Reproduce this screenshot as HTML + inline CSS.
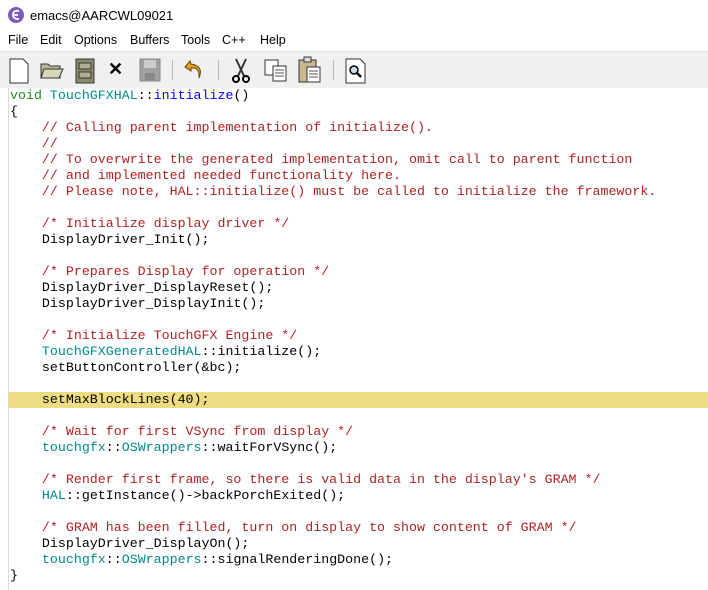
<!DOCTYPE html>
<html><head><style>
body{margin:0;width:708px;height:590px;overflow:hidden;background:#fff;font-family:"Liberation Sans",sans-serif;position:relative}
#title{position:absolute;top:0;left:0;width:708px;height:30px;background:#fff;font-size:13px}
#title span{position:absolute;left:30px;top:8px}
#menu{position:absolute;top:30px;left:0;width:708px;height:20px;font-size:12.5px}
#menu span{position:absolute;top:3px}
#tb{position:absolute;top:51px;left:0;width:708px;height:36px;background:#f0f0f0;border-top:1px solid #e0e0e0}
.ic{position:absolute;top:6px}
.sep{position:absolute;top:8px;width:1px;height:20px;background:#b8b8b8}
#code{position:absolute;top:88px;left:0;width:708px;height:502px;border-left:1px solid #d8d8d8;margin-left:8px}
pre{margin:0;font-family:"Liberation Mono",monospace;font-size:13.3px;line-height:16px;color:#000}
.l{height:16px;padding-left:1px;white-space:pre}
.c{color:#b22222}.t{color:#228b22}.y{color:#008b8b}.f{color:#0000ff}
.hl{background:#eedc82}
</style></head><body>
<div id="title"><svg style="position:absolute;left:7px;top:6px" width="18" height="18"><circle cx="9" cy="9" r="8" fill="#7f5ab6"/><path d="M12 5 Q6 4 6 9 Q6 13 12 13 M6 9 H11" stroke="#fff" stroke-width="1.8" fill="none"/></svg><span>emacs@AARCWL09021</span></div>
<div id="menu"><span style="left:8px">File</span><span style="left:40px">Edit</span><span style="left:74px">Options</span><span style="left:130px">Buffers</span><span style="left:181px">Tools</span><span style="left:222px">C++</span><span style="left:260px">Help</span></div>
<div id="tb">
<svg class="ic" style="left:8px" width="22" height="26"><path d="M2 1H15L20 6V25H2Z" fill="#fff" stroke="#333"/></svg>
<svg class="ic" style="left:40px" width="24" height="24"><path d="M1 6H8L10 8H20V20H1Z" fill="#b8b89a" stroke="#333"/><path d="M4 11H23L19 20H1Z" fill="#d8d8b8" stroke="#333"/></svg>
<svg class="ic" style="left:75px" width="20" height="26"><rect x="1" y="1" width="18" height="24" fill="#8c8c6c" stroke="#333"/><rect x="4" y="5" width="12" height="6" fill="#b0b090" stroke="#333"/><rect x="4" y="14" width="12" height="6" fill="#b0b090" stroke="#333"/></svg>
<div class="ic" style="left:108px;top:7px;font-size:18px;font-weight:bold">✕</div>
<svg class="ic" style="left:139px" width="22" height="24"><rect x="1" y="1" width="20" height="22" fill="#a0a0a0" stroke="#888"/><rect x="5" y="2" width="12" height="8" fill="#ccc"/><rect x="6" y="15" width="10" height="7" fill="#888"/></svg>
<div class="sep" style="left:172px"></div>
<svg class="ic" style="left:184px" width="22" height="24"><path d="M6 3L1 9L7 13V10Q16 9 15 20Q20 8 7 6Z" fill="#e8a020" stroke="#604000"/></svg>
<div class="sep" style="left:218px"></div>
<svg class="ic" style="left:230px" width="22" height="26"><path d="M6 1L14 18M16 1L8 18" stroke="#333" stroke-width="2"/><circle cx="6" cy="21" r="3" fill="none" stroke="#000" stroke-width="2"/><circle cx="16" cy="21" r="3" fill="none" stroke="#000" stroke-width="2"/></svg>
<svg class="ic" style="left:264px" width="24" height="24"><rect x="1" y="2" width="13" height="15" fill="#fff" stroke="#333"/><rect x="9" y="8" width="13" height="15" fill="#fff" stroke="#333"/><path d="M11 12h9M11 15h9M11 18h9" stroke="#555"/></svg>
<svg class="ic" style="left:298px;top:4px" width="24" height="28"><rect x="1" y="4" width="17" height="22" fill="#c8b890" stroke="#333"/><rect x="6" y="1" width="7" height="5" fill="#ddd" stroke="#333"/><rect x="9" y="11" width="13" height="15" fill="#fff" stroke="#333"/><path d="M11 15h9M11 18h9M11 21h9" stroke="#555"/></svg>
<div class="sep" style="left:333px"></div>
<svg class="ic" style="left:345px" width="22" height="26"><path d="M1 1H15L20 6V25H1Z" fill="#fff" stroke="#333"/><circle cx="9" cy="12" r="4" fill="#cde" stroke="#000" stroke-width="1.5"/><path d="M12 15L16 19" stroke="#000" stroke-width="2.5"/></svg>
</div>
<div id="code"><pre>
<div class="l"><span class="t">void</span> <span class="y">TouchGFXHAL</span>::<span class="f">initialize</span>()</div><div class="l">{</div><div class="l c">    // Calling parent implementation of initialize().</div><div class="l c">    //</div><div class="l c">    // To overwrite the generated implementation, omit call to parent function</div><div class="l c">    // and implemented needed functionality here.</div><div class="l c">    // Please note, HAL::initialize() must be called to initialize the framework.</div><div class="l"></div><div class="l c">    /* Initialize display driver */</div><div class="l">    DisplayDriver_Init();</div><div class="l"></div><div class="l c">    /* Prepares Display for operation */</div><div class="l">    DisplayDriver_DisplayReset();</div><div class="l">    DisplayDriver_DisplayInit();</div><div class="l"></div><div class="l c">    /* Initialize TouchGFX Engine */</div><div class="l">    <span class="y">TouchGFXGeneratedHAL</span>::initialize();</div><div class="l">    setButtonController(&amp;bc);</div><div class="l"></div><div class="l hl">    setMaxBlockLines(40);</div><div class="l"></div><div class="l c">    /* Wait for first VSync from display */</div><div class="l">    <span class="y">touchgfx</span>::<span class="y">OSWrappers</span>::waitForVSync();</div><div class="l"></div><div class="l c">    /* Render first frame, so there is valid data in the display's GRAM */</div><div class="l">    <span class="y">HAL</span>::getInstance()-&gt;backPorchExited();</div><div class="l"></div><div class="l c">    /* GRAM has been filled, turn on display to show content of GRAM */</div><div class="l">    DisplayDriver_DisplayOn();</div><div class="l">    <span class="y">touchgfx</span>::<span class="y">OSWrappers</span>::signalRenderingDone();</div><div class="l">}</div></pre></div>
</body></html>
